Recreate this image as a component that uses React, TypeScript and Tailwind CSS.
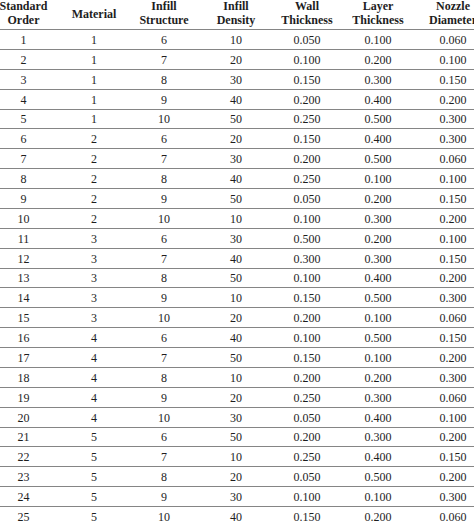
import React from 'react';

// Tabela planu eksperymentu (kolejność standardowa)
const rows: string[][] = [
  ['1', '1', '6', '10', '0.050', '0.100', '0.060'],
  ['2', '1', '7', '20', '0.100', '0.200', '0.100'],
  ['3', '1', '8', '30', '0.150', '0.300', '0.150'],
  ['4', '1', '9', '40', '0.200', '0.400', '0.200'],
  ['5', '1', '10', '50', '0.250', '0.500', '0.300'],
  ['6', '2', '6', '20', '0.150', '0.400', '0.300'],
  ['7', '2', '7', '30', '0.200', '0.500', '0.060'],
  ['8', '2', '8', '40', '0.250', '0.100', '0.100'],
  ['9', '2', '9', '50', '0.050', '0.200', '0.150'],
  ['10', '2', '10', '10', '0.100', '0.300', '0.200'],
  ['11', '3', '6', '30', '0.500', '0.200', '0.100'],
  ['12', '3', '7', '40', '0.300', '0.300', '0.150'],
  ['13', '3', '8', '50', '0.100', '0.400', '0.200'],
  ['14', '3', '9', '10', '0.150', '0.500', '0.300'],
  ['15', '3', '10', '20', '0.200', '0.100', '0.060'],
  ['16', '4', '6', '40', '0.100', '0.500', '0.150'],
  ['17', '4', '7', '50', '0.150', '0.100', '0.200'],
  ['18', '4', '8', '10', '0.200', '0.200', '0.300'],
  ['19', '4', '9', '20', '0.250', '0.300', '0.060'],
  ['20', '4', '10', '30', '0.050', '0.400', '0.100'],
  ['21', '5', '6', '50', '0.200', '0.300', '0.200'],
  ['22', '5', '7', '10', '0.250', '0.400', '0.150'],
  ['23', '5', '8', '20', '0.050', '0.500', '0.200'],
  ['24', '5', '9', '30', '0.100', '0.100', '0.300'],
  ['25', '5', '10', '40', '0.150', '0.200', '0.060'],
];

const headers: [string, string][] = [
  ['Standard', 'Order'],
  ['', 'Material'],
  ['Infill', 'Structure'],
  ['Infill', 'Density'],
  ['Wall', 'Thickness'],
  ['Layer', 'Thickness'],
  ['Nozzle', 'Diameter'],
];

const grid = 'grid grid-cols-[59px_70px_70px_74px_68px_74px_76px]';

const Cell: React.FC<{ i: number; children: React.ReactNode }> = ({ i, children }) => (
  <div className={`flex justify-center whitespace-nowrap ${i === 0 ? 'pr-[12px]' : ''}`}>{children}</div>
);

export default function App() {
  return (
    <div
      className="w-[474px] h-[523px] overflow-hidden bg-white text-[#1e1e1e]"
      style={{ fontFamily: '"Liberation Serif", "Times New Roman", serif' }}
    >
      <div className="w-[491px]">
        {/* Nagłówek */}
        <div className={`${grid} h-[29px] items-end pb-[5px] text-[12px] leading-[13.5px] font-bold`}>
          {headers.map(([a, b], i) => (
            <Cell key={i} i={i}>
              <div className="flex flex-col items-center">
                {a ? <span>{a}</span> : null}
                <span className={a ? '' : 'relative top-[-6px]'}>{b}</span>
              </div>
            </Cell>
          ))}
        </div>

        {/* Wiersze */}
        {rows.map((r, ri) => (
          <div
            key={ri}
            className={`${grid} h-[19.875px] items-center pt-[1px] border-t border-[#858585] text-[12px] leading-none`}
          >
            {r.map((v, i) => (
              <Cell key={i} i={i}>
                {v}
              </Cell>
            ))}
          </div>
        ))}
      </div>
    </div>
  );
}
